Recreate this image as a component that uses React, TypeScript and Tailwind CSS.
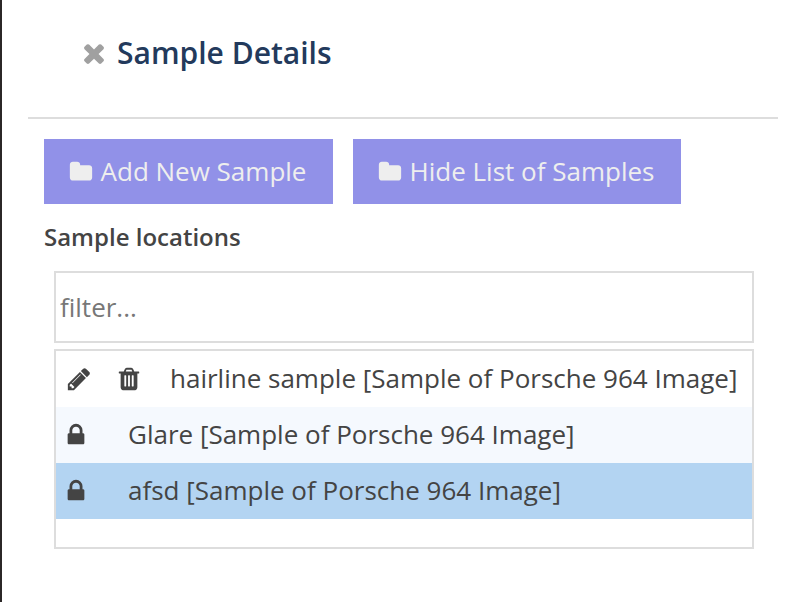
const icons = {
  times:
    'M1490 1322q0 40-28 68l-136 136q-28 28-68 28t-68-28l-294-294-294 294q-28 28-68 28t-68-28l-136-136q-28-28-28-68t28-68l294-294-294-294q-28-28-28-68t28-68l136-136q28-28 68-28t68 28l294 294 294-294q28-28 68-28t68 28l136 136q28 28 28 68t-28 68l-294 294 294 294q28 28 28 68z',
  folder:
    'M1728 608v704q0 92-66 158t-158 66h-1216q-92 0-158-66t-66-158v-960q0-92 66-158t158-66h320q92 0 158 66t66 158v32h672q92 0 158 66t66 158z',
  pencil:
    'M491 1536l91-91-235-235-91 91v107h128v128h107zm523-928q0-22-22-22-10 0-17 7l-542 542q-7 7-7 17 0 22 22 22 10 0 17-7l542-542q7-7 7-17zm-54-192l416 416-832 832h-416v-416zm683 96q0 53-37 90l-166 166-416-416 166-165q36-38 90-38 53 0 91 38l235 234q37 39 37 91z',
  trash:
    'M704 1376v-704q0-14-9-23t-23-9h-64q-14 0-23 9t-9 23v704q0 14 9 23t23 9h64q14 0 23-9t9-23zm256 0v-704q0-14-9-23t-23-9h-64q-14 0-23 9t-9 23v704q0 14 9 23t23 9h64q14 0 23-9t9-23zm256 0v-704q0-14-9-23t-23-9h-64q-14 0-23 9t-9 23v704q0 14 9 23t23 9h64q14 0 23-9t9-23zm-544-992h448l-48-117q-7-9-17-11h-317q-10 2-17 11zm928 32v64q0 14-9 23t-23 9h-96v948q0 83-47 143.5t-113 60.5h-832q-66 0-113-58.5t-47-141.5v-952h-96q-14 0-23-9t-9-23v-64q0-14 9-23t23-9h309l70-167q15-37 54-63t79-26h320q40 0 79 26t54 63l70 167h309q14 0 23 9t9 23z',
  lock:
    'M640 768h512v-192q0-106-75-181t-181-75-181 75-75 181v192zm832 96v576q0 40-28 68t-68 28h-960q-40 0-68-28t-28-68v-576q0-40 28-68t68-28h32v-192q0-184 132-316t316-132 316 132 132 316v192h32q40 0 68 28t28 68z',
}

function Icon({ d, className }: { d: string; className: string }) {
  return (
    <svg viewBox="0 0 1792 1792" fill="currentColor" className={`shrink-0 ${className}`}>
      <path d={d} />
    </svg>
  )
}

const samples = [
  { name: 'Glare [Sample of Porsche 964 Image]', className: 'bg-[#f5f9fe]' },
  { name: 'afsd [Sample of Porsche 964 Image]', className: 'bg-[#b3d4f2]' },
]

function FolderButton({ label, width }: { label: string; width: string }) {
  return (
    <button type="button" className={`flex h-[65px] items-center justify-center gap-[8px] bg-[#9191e8] pr-[2px] text-[26px] text-[#eeeeee] ${width}`}>
      <Icon d={icons.folder} className="h-[24px] w-[24px]" />
      {label}
    </button>
  )
}

export default function App() {
  return (
    <div className="h-[602px] w-[792px] overflow-hidden border-l-2 border-[#2b2727] bg-white font-['Open_Sans',sans-serif] text-[#444444]">
      <div className="flex h-[117px] items-start pl-[77px] pt-[32px]">
        <Icon d={icons.times} className="mt-[6px] h-[30px] w-[30px] text-[#a0a0a0]" />
        <h1 className="ml-[8px] text-[30px] leading-[42px] font-semibold text-[#233a5c]">Sample Details</h1>
      </div>
      <div className="ml-[26px] w-[750px] border-t-2 border-[#dddddd]" />

      <div className="mt-[20px] ml-[42px] flex gap-[20px]">
        <FolderButton label="Add New Sample" width="w-[289px]" />
        <FolderButton label="Hide List of Samples" width="w-[328px]" />
      </div>

      <h2 className="mt-[18px] ml-[42px] text-[24px] leading-[30px] font-semibold">Sample locations</h2>

      <div className="mt-[19px] ml-[52px] w-[700px]">
        <input
          placeholder="filter..."
          className="h-[72px] w-full border-2 border-[#dddddd] px-[4px] text-[26px] outline-none placeholder:text-[#777777]"
        />
        <div className="mt-[6px] h-[200px] border-2 border-[#dddddd] text-[26px]">
          <div className="flex h-[56px] items-center pl-[10px]">
            <Icon d={icons.pencil} className="h-[26px] w-[26px]" />
            <Icon d={icons.trash} className="ml-[24px] h-[26px] w-[26px]" />
            <span className="ml-[28px] whitespace-nowrap pb-[2px]">hairline sample [Sample of Porsche 964 Image]</span>
          </div>
          {samples.map((s) => (
            <div key={s.name} className={`flex h-[56px] items-center pl-[7px] ${s.className}`}>
              <Icon d={icons.lock} className="h-[26px] w-[26px]" />
              <span className="ml-[39px] whitespace-nowrap pb-[2px]">{s.name}</span>
            </div>
          ))}
        </div>
      </div>
    </div>
  )
}
